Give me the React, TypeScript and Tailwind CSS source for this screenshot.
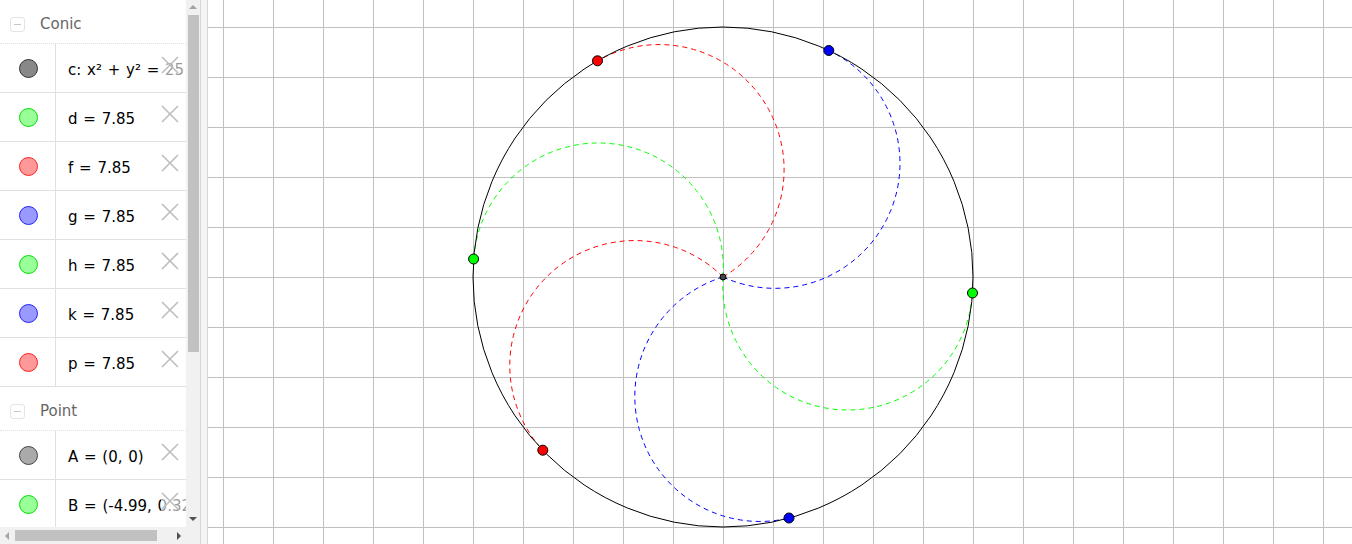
import React from 'react'

const font = { fontFamily: '"DejaVu Sans", "Liberation Sans", sans-serif' }

type Row = { label: string; fill: string; stroke: string }

const conics: Row[] = [
  { label: 'c: x² + y² = 25', fill: '#888888', stroke: '#333333' },
  { label: 'd = 7.85', fill: '#99ff99', stroke: '#00e000' },
  { label: 'f = 7.85', fill: '#ff9999', stroke: '#ff2020' },
  { label: 'g = 7.85', fill: '#9999ff', stroke: '#2020ff' },
  { label: 'h = 7.85', fill: '#99ff99', stroke: '#00e000' },
  { label: 'k = 7.85', fill: '#9999ff', stroke: '#2020ff' },
  { label: 'p = 7.85', fill: '#ff9999', stroke: '#ff2020' },
]

const points: Row[] = [
  { label: 'A = (0, 0)', fill: '#aaaaaa', stroke: '#444444' },
  { label: 'B = (-4.99, 0.32)', fill: '#99ff99', stroke: '#00e000' },
]

function Header({ title }: { title: string }) {
  return (
    <div className="flex h-[44px] items-center border-b border-dotted border-[#e0e0e0] pl-[10px] pt-[6px]">
      <div className="flex h-[15px] w-[15px] items-center justify-center rounded-[3px] border border-[#e4e4e4]">
        <div className="h-[1px] w-[7px] bg-[#c8c8c8]" />
      </div>
      <span className="ml-[15px] text-[15px] text-[#666]">{title}</span>
    </div>
  )
}

function Item({ row }: { row: Row }) {
  return (
    <div className="relative flex h-[49px] border-b border-[#e0e0e0]">
      <div className="flex w-[56px] shrink-0 items-center justify-center border-r border-[#e0e0e0] pl-[1px]">
        <div
          className="h-[19px] w-[19px] rounded-full border"
          style={{ background: row.fill, borderColor: row.stroke }}
        />
      </div>
      <div className="flex items-center whitespace-nowrap pl-[12px] pt-[5px] text-[15px] text-black [word-spacing:1px]">
        {row.label}
      </div>
      <div className="absolute right-0 top-[8px] flex h-[26px] w-[25px] items-center justify-start bg-white/60">
        <svg width="18" height="18" viewBox="0 0 18 18">
          <path d="M1 1 L17 17 M17 1 L1 17" stroke="#bdbdbd" strokeWidth="1.6" />
        </svg>
      </div>
    </div>
  )
}

function Sidebar() {
  return (
    <div className="flex h-[544px] w-[200px] shrink-0 flex-col bg-white" style={font}>
      <div className="flex h-[527px]">
        <div className="w-[186px] overflow-hidden">
          <Header title="Conic" />
          {conics.map((r) => (
            <Item key={r.label} row={r} />
          ))}
          <Header title="Point" />
          {points.map((r) => (
            <Item key={r.label} row={r} />
          ))}
        </div>
        <div className="flex w-[14px] flex-col items-center bg-[#f1f1f1]">
          <div className="flex h-[14px] items-center justify-center">
            <div className="h-0 w-0 border-x-[4px] border-b-[4px] border-x-transparent border-b-[#a3a3a3]" />
          </div>
          <div className="mt-[1px] h-[337px] w-[11px] bg-[#c1c1c1]" />
          <div className="flex-1" />
          <div className="flex h-[14px] items-center justify-center pb-[2px]">
            <div className="h-0 w-0 border-x-[4px] border-t-[4px] border-x-transparent border-t-[#505050]" />
          </div>
        </div>
      </div>
      <div className="flex h-[17px]">
        <div className="flex w-[186px] items-center bg-[#f1f1f1]">
          <div className="flex w-[14px] justify-center">
            <div className="h-0 w-0 border-y-[4px] border-r-[4px] border-y-transparent border-r-[#a3a3a3]" />
          </div>
          <div className="ml-[1px] h-[11px] w-[142px] bg-[#c1c1c1]" />
          <div className="flex-1" />
          <div className="flex w-[14px] justify-center">
            <div className="h-0 w-0 border-y-[4px] border-l-[4px] border-y-transparent border-l-[#505050]" />
          </div>
        </div>
        <div className="w-[14px] bg-[#f1f1f1]" />
      </div>
    </div>
  )
}

const O = { x: 723, y: 277 }
const pts = [
  { x: 597.5, y: 60.8, c: '#ff0000' },
  { x: 828.8, y: 50.5, c: '#0000ff' },
  { x: 473.6, y: 259, c: '#00ff00' },
  { x: 972.5, y: 293, c: '#00ff00' },
  { x: 542.8, y: 450.2, c: '#ff0000' },
  { x: 789, y: 518, c: '#0000ff' },
]

function Graphics() {
  const vx: number[] = []
  for (let x = 223; x < 1352; x += 50) vx.push(x)
  const hy: number[] = []
  for (let y = 27; y < 544; y += 50) hy.push(y)
  return (
    <div className="h-[544px] flex-1 overflow-hidden bg-white">
      <svg width="1144" height="544" viewBox="208 0 1144 544">
        {vx.map((x) => (
          <line key={'v' + x} x1={x + 0.5} y1={0} x2={x + 0.5} y2={544} stroke="#c0c0c0" strokeWidth="1" />
        ))}
        {hy.map((y) => (
          <line key={'h' + y} x1={208} y1={y + 0.5} x2={1352} y2={y + 0.5} stroke="#c0c0c0" strokeWidth="1" />
        ))}
        {pts.map((p, i) => (
          <path
            key={'a' + i}
            d={`M ${O.x} ${O.y} A 125 125 0 0 0 ${p.x} ${p.y}`}
            fill="none"
            stroke={p.c}
            strokeWidth="1"
            strokeDasharray="5 4"
          />
        ))}
        <circle cx={O.x} cy={O.y} r={250} fill="none" stroke="#000" strokeWidth="1" />
        {pts.map((p, i) => (
          <circle key={'p' + i} cx={p.x} cy={p.y} r={5} fill={p.c} stroke="#000" strokeWidth="1" />
        ))}
        <circle cx={O.x} cy={O.y} r={3} fill="#444" stroke="#000" strokeWidth="1" />
      </svg>
    </div>
  )
}

export default function App() {
  return (
    <div className="flex h-[544px] w-[1352px] overflow-hidden bg-white">
      <Sidebar />
      <div className="h-[544px] w-[8px] shrink-0 border-x border-[#d6d6d6] bg-[#f5f5f5]" />
      <Graphics />
    </div>
  )
}
